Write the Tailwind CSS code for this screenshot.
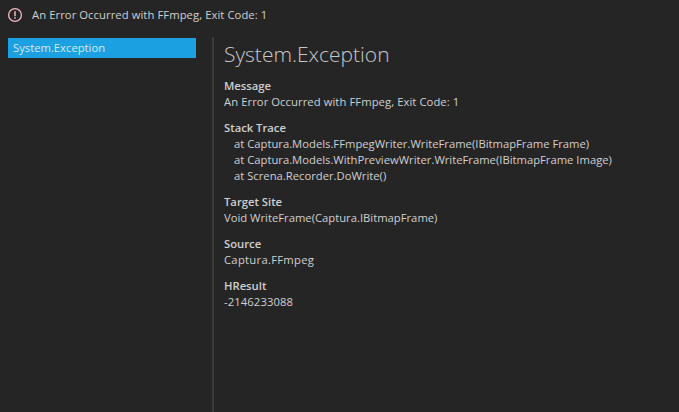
<!DOCTYPE html>
<html lang="en">
<head>
  <meta charset="UTF-8">
  <title>Exception</title>
  <script src="https://cdn.jsdelivr.net/npm/@tailwindcss/browser@4"></script>
</head>
<body class="bg-[#252526] text-[#d0d0d0] font-['Open_Sans',sans-serif] text-[11.25px] leading-[16px] w-[679px] h-[412px] overflow-hidden">
  <!-- Header -->
  <div class="flex items-center h-[30px] pl-[7px]">
    <svg class="w-[16px] h-[16px] -mt-px" viewBox="0 0 16 16" fill="none" stroke="#f4b8c4" stroke-width="1.3">
      <circle cx="8" cy="8" r="6.4"></circle>
      <path d="M8 4.2v5M8 10.3v1.5" stroke-width="1.5"></path>
    </svg>
    <span class="ml-[9px] tracking-[0.07px]">An Error Occurred with FFmpeg, Exit Code: 1</span>
  </div>

  <div class="flex h-[382px] pt-[7px]">
    <!-- List -->
    <div class="w-[212px] pl-[8px] pt-px shrink-0">
      <div class="w-[188px] h-[20px] bg-[#1ba1e2] pl-[5px] leading-[20px] text-[#d8e8f0]">System.Exception</div>
    </div>

    <!-- Details -->
    <div class="flex-1 border-l-2 border-[#3a3a42] pl-[10px] pt-[2px]">
      <h1 class="text-[21px] leading-[30px] font-light text-[#c8c8c8] mb-[9px]">System.Exception</h1>

      <div class="mb-[10px]">
        <div class="font-semibold">Message</div>
        <div class="tracking-[0.07px]">An Error Occurred with FFmpeg, Exit Code: 1</div>
      </div>

      <div class="mb-[10px]">
        <div class="font-semibold">Stack Trace</div>
        <div class="pl-[10px]">at Captura.Models.FFmpegWriter.WriteFrame(IBitmapFrame Frame)</div>
        <div class="pl-[10px]">at Captura.Models.WithPreviewWriter.WriteFrame(IBitmapFrame Image)</div>
        <div class="pl-[10px]">at Screna.Recorder.DoWrite()</div>
      </div>

      <div class="mb-[10px]">
        <div class="font-semibold">Target Site</div>
        <div>Void WriteFrame(Captura.IBitmapFrame)</div>
      </div>

      <div class="mb-[10px]">
        <div class="font-semibold">Source</div>
        <div class="tracking-[0.28px]">Captura.FFmpeg</div>
      </div>

      <div>
        <div class="font-semibold">HResult</div>
        <div class="tracking-[0.1px]">-2146233088</div>
      </div>
    </div>
  </div>
</body>
</html>
